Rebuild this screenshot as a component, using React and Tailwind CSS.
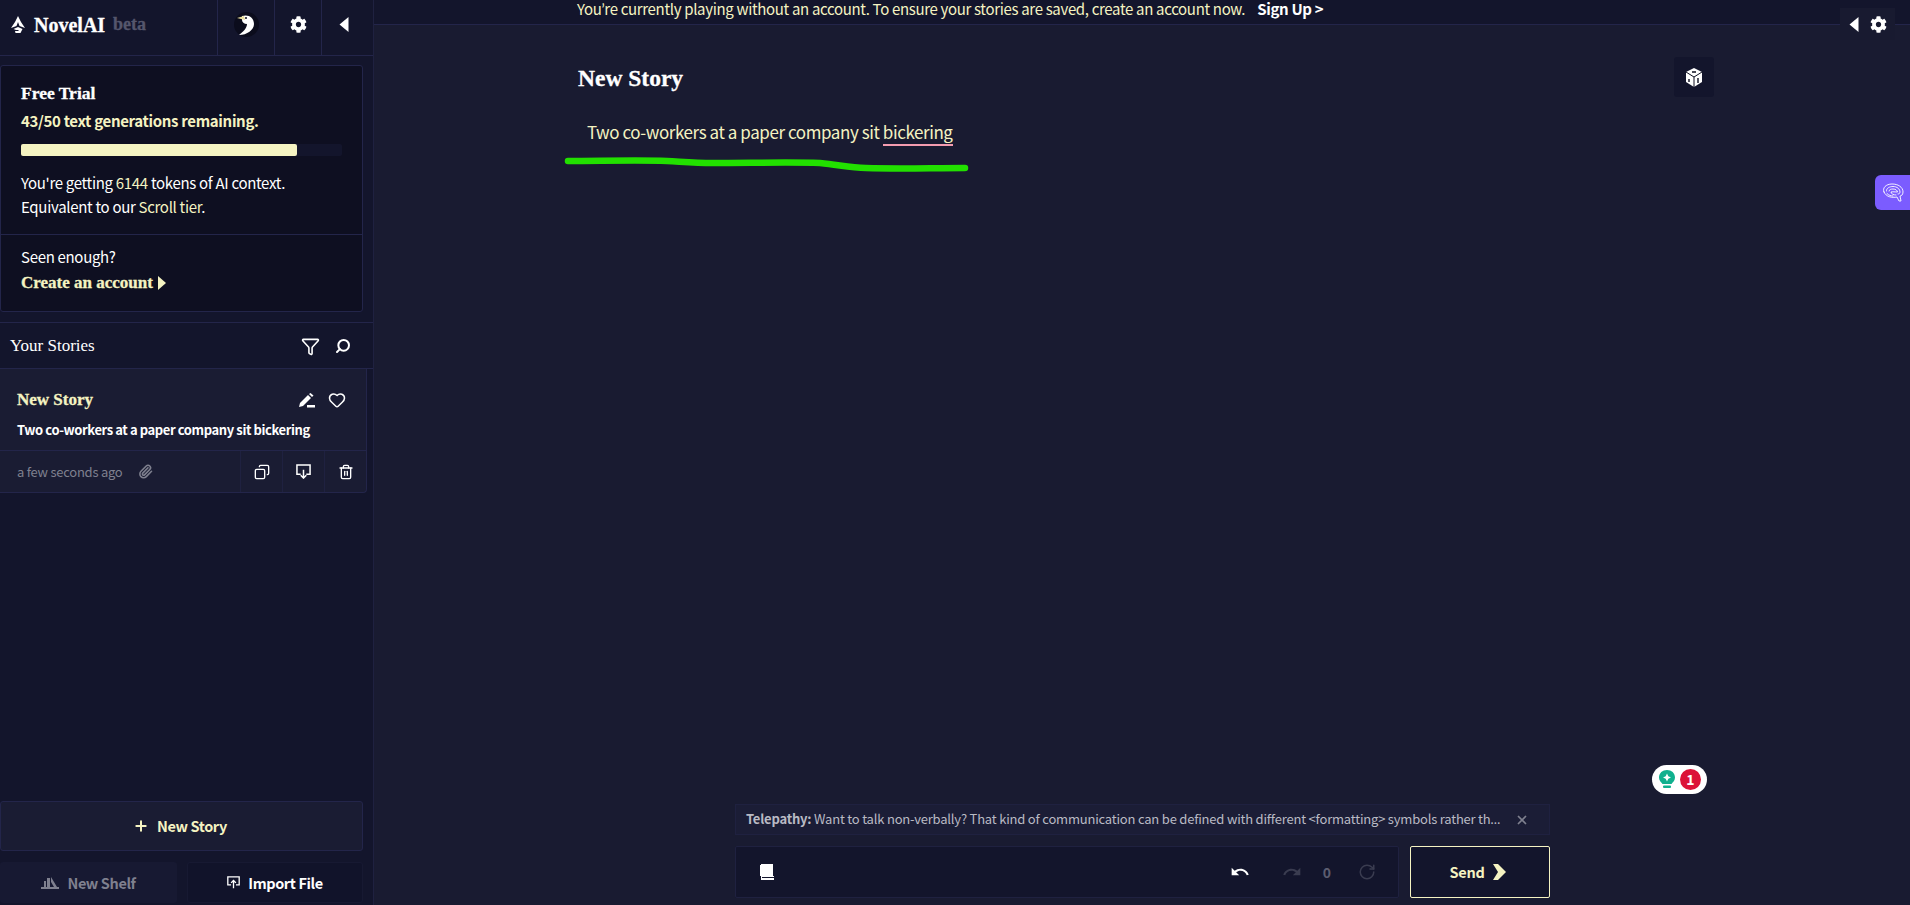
import React from "react";
import { Filter, Search, Heart, Copy, Trash2, Paperclip, RotateCw, X, Plus } from "lucide-react";
import { FaCog } from "react-icons/fa";
import { MdUndo, MdRedo } from "react-icons/md";

const serif = "font-['Liberation_Serif',serif] font-bold [-webkit-text-stroke:0.3px]";

// small icons the packages don't have
function Logo() {
  return (
    <svg width="14" height="17" viewBox="0 0 14 17" fill="white">
      <path d="M7 0 L10 6 L14 12 L8.5 10 L7 6 L5.5 10 L0 12 L4 6 Z" />
      <path d="M2.5 13 L7 11 L11.5 13 L9.5 17 L4.5 17 L4 15 L7 15 L8 14 L5 14 Z" />
    </svg>
  );
}

function Goose() {
  return (
    <div className="w-[25px] h-[25px] rounded-full bg-[#0b0c1c] flex items-center justify-center">
      <svg width="22" height="24" viewBox="0 0 22 24">
        <path d="M7 3 C13 1 19 4 19 11 C19 17 12 22 4 22 C8 19 12 15 12 11 C9 11 7 9 7 7 Z" fill="white" />
        <path d="M2 5 L9 3 L10 7 Z" fill="#e8dd9c" />
        <circle cx="11" cy="5" r="1" fill="#0b0c1c" />
      </svg>
    </div>
  );
}

function LeftArrow() {
  return (
    <svg width="10" height="15" viewBox="0 0 10 15" fill="white">
      <path d="M9.5 0 V15 L0.5 7.5 Z" />
    </svg>
  );
}

function Pen() {
  return (
    <svg width="17" height="15" viewBox="0 0 17 15" fill="white">
      <path d="M0 14 L1 10 L9 2 L12 5 L4 13 Z" />
      <path d="M10 1 L11.5 0 L14.5 2.5 L13 4 Z" />
      <rect x="8" y="12" width="8" height="2.5" />
    </svg>
  );
}

function BoxArrow({ up, size = 15 }) {
  return (
    <svg width={size} height={size} viewBox="0 0 16 16" fill="none" stroke="white" strokeWidth="1.6">
      <path d="M5 11 H1 V1 H15 V11 H11" />
      {up ? <path d="M8 15 V6 M5 8.5 L8 5.5 L11 8.5" /> : <path d="M8 6 V15 M5 12 L8 15 L11 12" />}
    </svg>
  );
}

function Shelf() {
  return (
    <svg width="18" height="13" viewBox="0 0 18 13" fill="#7f808f">
      <rect x="0" y="11" width="18" height="2" />
      <rect x="3" y="5" width="2" height="6" />
      <rect x="6" y="2" width="3" height="9" />
      <path d="M10 1 L16 11 H13 L10 6 Z" />
    </svg>
  );
}

function Dice() {
  return (
    <svg width="18" height="19" viewBox="0 0 18 19">
      <path d="M9 0 L17 4 V14 L9 19 L1 14 V4 Z" fill="white" />
      <path d="M9 9 L9 19 M1 4 L9 9 L17 4" stroke="#0e0f21" strokeWidth="1" fill="none" />
      <path d="M7 4 H11 M4 11 V14 M13 10 V15" stroke="#0e0f21" strokeWidth="1.4" />
    </svg>
  );
}

function Book() {
  return (
    <svg width="14" height="16" viewBox="0 0 14 16" fill="white">
      <path d="M1 0 H13 V12 H1 Z" />
      <path d="M0 1 H1 V16 H14 V14 H2 V13 H14 V12 H0 Z" />
    </svg>
  );
}

function Bulb() {
  return (
    <svg width="16" height="19" viewBox="0 0 16 19">
      <path d="M8 0 C12.5 0 16 3 16 7.5 C16 10.5 14 12 12.5 14 H3.5 C2 12 0 10.5 0 7.5 C0 3 3.5 0 8 0 Z" fill="#10b08e" />
      <path d="M8 3.5 L9.3 6.2 L12 7.5 L9.3 8.8 L8 11.5 L6.7 8.8 L4 7.5 L6.7 6.2 Z" fill="white" />
      <rect x="4" y="15.5" width="8" height="2.5" rx="1" fill="#10b08e" />
    </svg>
  );
}

function BrainIcon() {
  return (
    <svg width="22" height="20" viewBox="0 0 22 20" fill="none" stroke="white" strokeWidth="0.9" strokeLinecap="round">
      <path d="M2 9 C0 5 4 1 10 1 C16 1 21 4 21 9 C21 12 19 13 18 13 L19 18 L17 18 L15 14 C10 15 4 14 2 9 Z" />
      <path d="M4.5 8 C4 5 8 3.5 11 3.5 C15 3.5 18 6 18 9 C18 10.5 17 11 16 11" />
      <path d="M7 8 C7 6.5 9 6 11 6 C13.5 6 15.5 7.5 15.5 9 C13 9 11 8.5 9 9 C9 11 12 12 14 12" />
      <path d="M5 10.5 C7 12.5 9 13 11 13" />
    </svg>
  );
}

function Sidebar() {
  return (
    <aside className="w-[374px] shrink-0 h-[905px] flex flex-col bg-[#13152c] border-r border-[#1f2140]">
      <header className="h-[56px] shrink-0 flex border-b border-[#23254a]">
        <div className="flex-1 flex items-center pl-[11px] pb-[6px]">
          <Logo />
          <span className={`${serif} ml-[9px] text-[20px] text-white`}>NovelAI</span>
          <span className={`${serif} ml-[8px] text-[18px] text-[#55566c]`}>beta</span>
        </div>
        <div className="w-[57px] flex items-center justify-center border-l border-[#23254a] pb-[6px]">
          <Goose />
        </div>
        <div className="w-[47px] flex items-center justify-center border-l border-[#23254a] pb-[6px]">
          <FaCog className="text-white text-[17px]" />
        </div>
        <div className="w-[52px] flex items-center justify-center border-l border-[#23254a] pb-[6px] pr-[8px]">
          <LeftArrow />
        </div>
      </header>

      <section className="mt-[9px] w-[363px] h-[247px] shrink-0 bg-[#0e0f21] border border-[#23254a] rounded-[3px] flex flex-col">
        <div className="h-[169px] pl-[20px] pr-[20px] pt-[16px] border-b border-[#23254a]">
          <div className={`${serif} text-[17.5px] leading-[22px] text-white`}>Free Trial</div>
          <div className="mt-[6px] text-[15px] tracking-[-0.33px] leading-[22px] font-bold text-[#f5f3c2]">43/50 text generations remaining.</div>
          <div className="mt-[12px] h-[12px] w-[321px] bg-[#13152c] rounded-[2px]">
            <div className="h-full w-[276px] bg-[#f5f3c2] rounded-[2px]" />
          </div>
          <div className="mt-[15px] text-[15px] tracking-[-0.31px] leading-[24px] text-white">
            You're getting <span className="text-[#f5f3c2]">6144</span> tokens of AI context.
            <br />
            Equivalent to our <span className="text-[#f5f3c2]">Scroll tier</span>.
          </div>
        </div>
        <div className="pl-[20px] pt-[10px]">
          <div className="text-[15px] tracking-[-0.31px] leading-[24px] text-white">Seen enough?</div>
          <div className="mt-[2px] flex items-center gap-[5px]">
            <span className={`${serif} text-[17px] leading-[24px] text-[#f5f3c2]`}>Create an account</span>
            <svg width="8" height="14" viewBox="0 0 8 14" fill="#f5f3c2"><path d="M0 0 V14 L8 7 Z" /></svg>
          </div>
        </div>
      </section>

      <div className="mt-[10px] h-[47px] shrink-0 flex items-center pl-[10px] pr-[22px] pt-[1px] border-t border-b border-[#23254a]">
        <span className="font-['Liberation_Serif',serif] text-[17px] text-white flex-1">Your Stories</span>
        <Filter className="text-white" size={19} />
        <Search className="text-white ml-[15px] -scale-x-100" size={16} strokeWidth={3} />
      </div>

      <article className="w-[367px] h-[124px] shrink-0 bg-[#1a1c33] border-r border-b border-[#23254a] rounded-br-[4px] flex flex-col">
        <div className="h-[82px] pl-[17px] pr-[20px] pt-[19px] border-b border-[#23254a]">
          <div className="flex items-center h-[24px]">
            <span className={`${serif} text-[17px] text-[#f5f3c2] flex-1`}>New Story</span>
            <Pen />
            <Heart className="text-white ml-[12px]" size={18} strokeWidth={2} />
          </div>
          <div className="mt-[8px] text-[13px] tracking-[-0.4px] leading-[20px] font-semibold text-white">
            Two co-workers at a paper company sit bickering
          </div>
        </div>
        <div className="flex-1 flex items-center">
          <div className="flex-1 flex items-center pl-[17px] gap-[16px]">
            <span className="text-[13px] tracking-[-0.25px] text-[#7f808f]">a few seconds ago</span>
            <Paperclip className="text-[#7f808f]" size={15} strokeWidth={2.5} />
          </div>
          <div className="w-[42px] h-full flex items-center justify-center border-l border-[#1f2140]">
            <Copy className="text-white -scale-x-100" size={16} />
          </div>
          <div className="w-[42px] h-full flex items-center justify-center border-l border-[#1f2140]">
            <BoxArrow />
          </div>
          <div className="w-[42px] h-full flex items-center justify-center border-l border-[#1f2140]">
            <Trash2 className="text-white" size={16} />
          </div>
        </div>
      </article>

      <div className="mt-auto w-[363px] h-[50px] flex items-center justify-center gap-[8px] pr-[3px] bg-[#1a1c33] border border-[#23254a] rounded-[3px] text-[14.5px] tracking-[-0.4px] font-semibold text-[#f5f3c2]">
        <Plus size={16} strokeWidth={3} />
        New Story
      </div>
      <div className="mt-[11px] mb-[2px] w-[363px] h-[41px] flex gap-[10px]">
        <div className="w-[177px] flex items-center justify-center gap-[8px] bg-[#171932] rounded-[3px] text-[14.5px] tracking-[-0.4px] font-semibold text-[#7f808f]">
          <Shelf />
          New Shelf
        </div>
        <div className="flex-1 flex items-center justify-center gap-[8px] bg-[#11132a] border border-[#171932] rounded-[3px] text-[14.5px] tracking-[-0.4px] font-semibold text-white">
          <BoxArrow up size={13} />
          Import File
        </div>
      </div>
    </aside>
  );
}

function Editor() {
  return (
    <main className="relative flex-1 h-[905px] flex flex-col bg-[#191b31]">
      <div className="h-[25px] shrink-0 bg-[#13152c] border-b border-[#23254a] flex items-start pl-[203px] text-[15px] tracking-[-0.33px] leading-[18px] text-[#f5f3c2]">
        <span>You<span className="font-['Lato',sans-serif]">’</span>re currently playing without an account. To ensure your stories are saved, create an account now.</span>
        <span className="ml-[12px] font-semibold text-white">Sign Up &gt;</span>
      </div>

      <div className="flex flex-col w-[1136px] ml-[204px] shrink-0">
        <div className="mt-[32px] flex items-start justify-between h-[51px]">
          <h1 className={`${serif} text-[23.5px] leading-[43px] text-white`}>New Story</h1>
          <div className="w-[40px] h-[40px] bg-[#13152c] rounded-[3px] flex items-center justify-center">
            <Dice />
          </div>
        </div>
        <p className="ml-[9px] mt-[10px] text-[17px] tracking-[-0.43px] leading-[28px] text-[#f5f3c2]">
          Two co-workers at a paper company sit <span className="border-b-[2px] border-[#f49cb0]">bickering</span>
        </p>
      </div>

      <div className="mt-auto mb-[7px] ml-[361px] w-[815px] flex flex-col gap-[11px]">
        <div className="h-[31px] bg-[#1b1d36] border border-[#1f2140] flex items-center pl-[10px] pr-[20px] text-[13px] tracking-[-0.2px] text-[#b9bac4]">
          <span className="whitespace-nowrap flex-1">
            <b className="font-bold">Telepathy:</b> Want to talk non-verbally? That kind of communication can be defined with different &lt;formatting&gt; symbols rather th<span className="font-['Lato',sans-serif]">…</span>
          </span>
          <X className="text-[#7f808f]" size={14} strokeWidth={3} />
        </div>
        <div className="h-[52px] flex gap-[11px]">
          <div className="flex-1 bg-[#13152c] border border-[#1f2140] rounded-[2px] flex items-center pl-[24px] pr-[22px]">
            <Book />
            <MdUndo className="ml-auto text-white text-[20px]" />
            <MdRedo className="ml-[32px] text-[#3a3c50] text-[20px]" />
            <span className="ml-[21px] text-[14px] font-semibold text-[#5c5d70]">0</span>
            <RotateCw className="ml-[27px] text-[#3a3c50]" size={18} />
          </div>
          <div className="w-[140px] bg-[#13152c] border border-[#f5f3c2] rounded-[2px] flex items-center justify-center gap-[8px] pr-[4px] text-[14.5px] tracking-[-0.3px] font-semibold text-[#f5f3c2]">
            Send
            <svg width="14" height="16" viewBox="0 0 14 16" fill="#f5f3c2"><path d="M1 0 H6 L14 8 L6 16 H1 L6 8 Z" /></svg>
          </div>
        </div>
      </div>

      {/* hand drawn marker line over the text */}
      <svg className="absolute left-[186px] top-[155px]" width="415" height="20" viewBox="0 0 415 20" fill="none">
        <path d="M8 6 C40 6 80 5 107 6 C125 7 135 8 153 8 C190 8 230 7 260 8 C280 10 290 13 306 13 C340 14 370 13 405 13" stroke="#22e000" strokeWidth="6.5" strokeLinecap="round" />
      </svg>

      {/* floating widgets */}
      <div className="absolute right-[15px] top-[8px] w-[55px] h-[32px] bg-[#181a30] flex items-center justify-center gap-[11px]">
        <LeftArrow />
        <FaCog className="text-white text-[17px]" />
      </div>
      <div className="absolute right-0 top-[175px] w-[35px] h-[35px] bg-[#7b5cff] rounded-l-[6px] flex items-center justify-center">
        <BrainIcon />
      </div>
      <div className="absolute left-[1278px] top-[765px] w-[55px] h-[29px] bg-white rounded-full flex items-center pl-[7px] gap-[5px]">
        <Bulb />
        <span className="w-[21px] h-[21px] rounded-full bg-[#dc1237] text-white text-[14px] font-bold flex items-center justify-center">1</span>
      </div>
    </main>
  );
}

export default function App() {
  return (
    <div className="flex w-[1910px] h-[905px] overflow-hidden font-['Noto_Sans_CJK_SC','Noto_Sans',sans-serif]">
      <Sidebar />
      <Editor />
    </div>
  );
}
